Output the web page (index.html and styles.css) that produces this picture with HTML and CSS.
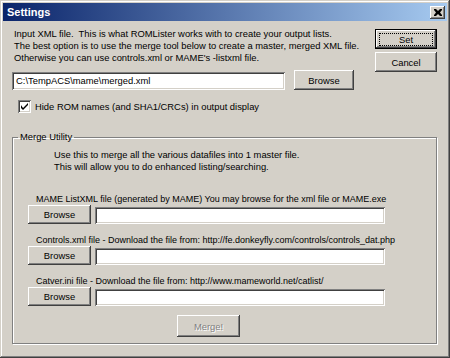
FILE: index.html
```html
<!DOCTYPE html>
<html>
<head>
<meta charset="utf-8">
<link rel="stylesheet" href="styles.css">
</head>
<body>
<div class="window">
  <div class="titlebar">
    <span class="title">Settings</span>
    <span class="close"><svg width="8" height="7" viewBox="0 0 8 7"><path d="M0 0h2l2 2 2-2h2v1L6 3.5 8 6v1H6L4 5 2 7H0V6l2-2.5L0 1z" fill="#000"/></svg></span>
  </div>
  <div class="client">
    <div class="top">
      <div class="left">
        <div class="intro">Input XML file.&nbsp; This is what ROMLister works with to create your output lists.<br>The best option is to use the merge tool below to create a master, merged XML file.<br>Otherwise you can use controls.xml or MAME's -listxml file.</div>
        <div class="pathrow">
          <div class="field path">C:\TempACS\mame\merged.xml</div>
          <div class="btn browse-top">Browse</div>
        </div>
        <div class="checkrow">
          <span class="checkbox"><svg width="7" height="7" viewBox="0 0 7 7"><path d="M0 2v3l2 2 5-5V0L2 5z" fill="#000"/></svg></span>
          <span>Hide ROM names (and SHA1/CRCs) in output display</span>
        </div>
      </div>
      <div class="right">
        <div class="btn default"><span class="focus">Set</span></div>
        <div class="btn">Cancel</div>
      </div>
    </div>
    <fieldset class="group">
      <legend>Merge Utility</legend>
      <div class="desc">Use this to merge all the various datafiles into 1 master file.<br>This will allow you to do enhanced listing/searching.</div>
      <div class="block first">
        <div class="label">MAME ListXML file (generated by MAME) You may browse for the xml file or MAME.exe</div>
        <div class="filerow"><div class="btn small">Browse</div><div class="field wide"></div></div>
      </div>
      <div class="block">
        <div class="label">Controls.xml file - Download the file from: http://fe.donkeyfly.com/controls/controls_dat.php</div>
        <div class="filerow"><div class="btn small">Browse</div><div class="field wide"></div></div>
      </div>
      <div class="block">
        <div class="label">Catver.ini file - Download the file from: http://www.mameworld.net/catlist/</div>
        <div class="filerow"><div class="btn small">Browse</div><div class="field wide"></div></div>
      </div>
      <div class="btn merge disabled">Merge!</div>
    </fieldset>
  </div>
</div>
</body>
</html>
```
FILE: styles.css
```css
* { box-sizing: border-box; }
html, body { margin: 0; padding: 0; background: #d4d0c8; }
body { font-family: "Liberation Sans", Arial, sans-serif; font-size: 9.4px; color: #000; }
.window {
  width: 450px; height: 358px; background: #d4d0c8; padding: 3px;
  box-shadow: inset -1px -1px 0 #404040, inset 1px 1px 0 #d4d0c8, inset -2px -2px 0 #808080, inset 2px 2px 0 #fff;
  display: flex; flex-direction: column;
}
.titlebar {
  height: 18px; background: linear-gradient(to right, #0a246a, #a6caf0);
  display: flex; align-items: center; justify-content: space-between; padding: 0 2px 0 4px;
}
.title { color: #fff; font-weight: bold; font-size: 11px; }
.close {
  width: 15px; height: 13px; background: #d4d0c8; display: flex; align-items: center; justify-content: center;
  box-shadow: inset -1px -1px 0 #404040, inset 1px 1px 0 #fff, inset -2px -2px 0 #808080;
}
.client { padding: 0 10px 0 9px; flex: 1; display: flex; flex-direction: column; }
.top { display: flex; gap: 21px; }
.left { width: 342px; }
.intro { margin: 7px 0 0 2px; line-height: 12px; white-space: nowrap; }
.pathrow { display: flex; align-items: flex-end; gap: 9px; margin-top: 6px; }
.field {
  background: #fff; height: 18px; line-height: 18px; padding-left: 4px;
  box-shadow: inset 1px 1px 0 #808080, inset -1px -1px 0 #fff, inset 2px 2px 0 #404040, inset -2px -2px 0 #d4d0c8;
}
.path { width: 273px; }
.btn {
  height: 20px; display: flex; align-items: center; justify-content: center; background: #d4d0c8;
  box-shadow: inset -1px -1px 0 #404040, inset 1px 1px 0 #fff, inset -2px -2px 0 #808080, inset 2px 2px 0 #d4d0c8;
}
.browse-top { width: 60px; }
.checkrow { display: flex; align-items: center; gap: 4px; margin: 10px 0 0 6px; }
.checkbox {
  width: 13px; height: 13px; background: #fff; display: flex; align-items: center; justify-content: center;
  box-shadow: inset 1px 1px 0 #808080, inset -1px -1px 0 #fff, inset 2px 2px 0 #404040, inset -2px -2px 0 #d4d0c8;
}
.right { width: 62px; padding-top: 8px; display: flex; flex-direction: column; gap: 3px; }
.right .btn { height: 20px; }
.btn.default {
  box-shadow: inset 0 0 0 1px #000, inset -2px -2px 0 #404040, inset 2px 2px 0 #fff, inset -3px -3px 0 #808080;
}
.focus { border: 1px dotted #000; width: 54px; height: 13px; display: flex; align-items: center; justify-content: center; }
.group {
  margin: 18px 0 0 0; padding: 0 0 6px 0; border: 1px solid #808080;
  box-shadow: 1px 1px 0 #fff, inset 1px 1px 0 #fff; min-width: 0;
}
.group legend { margin-left: 5px; padding: 0 2px; line-height: 12px; }
.desc { margin: 6px 0 0 41px; line-height: 12px; }
.block { margin-top: 10px; }
.block.first { margin-top: 20px; }
.label { margin-left: 23px; line-height: 12px; white-space: nowrap; font-size: 9px; }
.filerow { display: flex; align-items: flex-end; gap: 4px; margin-left: 15px; }
.btn.small { width: 63px; height: 19px; }
.field.wide { width: 290px; height: 17px; }
.btn.merge { width: 63px; height: 22px; margin: 9px 0 0 164px; }
.disabled { color: #808080; text-shadow: 1px 1px 0 #fff; }
```
